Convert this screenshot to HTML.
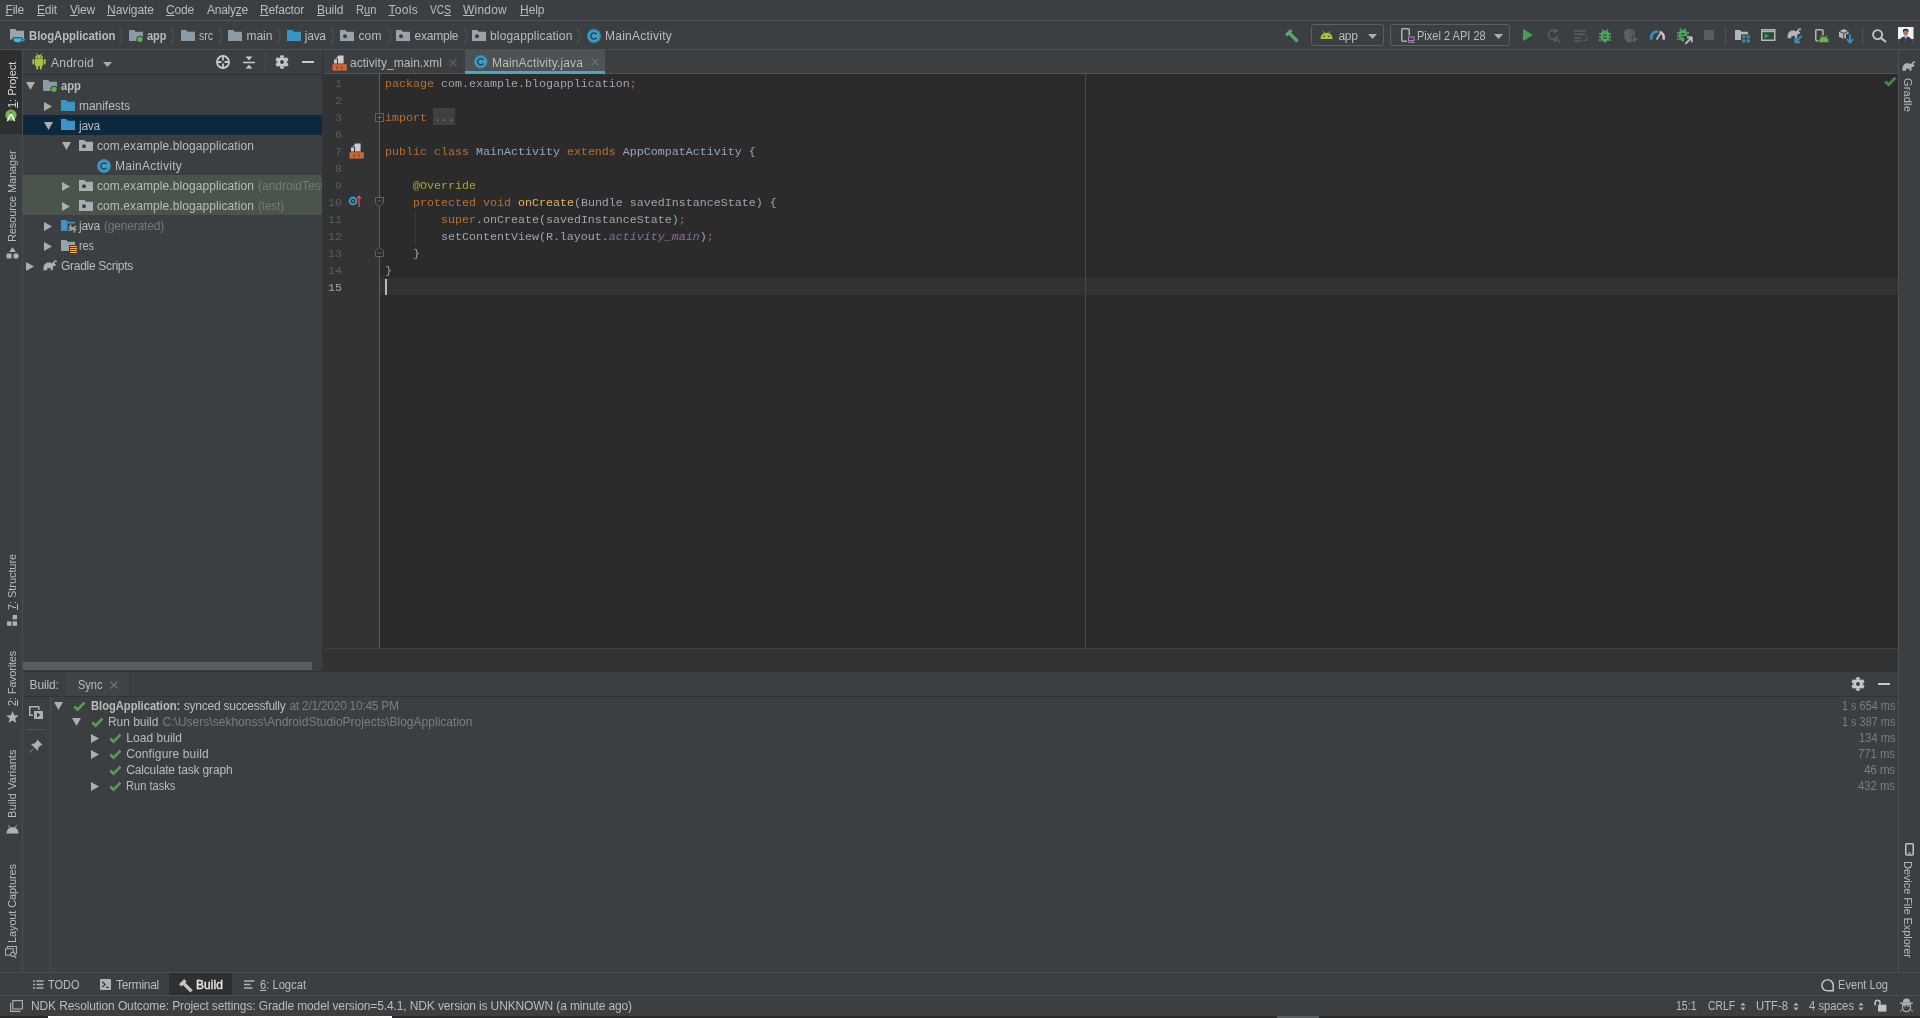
<!DOCTYPE html>
<html><head><meta charset="utf-8">
<title>BlogApplication - MainActivity.java - Android Studio</title>
<style>
*{box-sizing:border-box;margin:0;padding:0}
html,body{width:1920px;height:1018px;overflow:hidden;background:#3c3f41}
body{font-family:"Liberation Sans",sans-serif;font-size:12px;color:#bbbbbb;position:relative}
.abs{position:absolute}
.t{position:absolute;white-space:nowrap;line-height:16px;height:16px;font-size:12px}
.b{font-weight:bold}
.b2{color:#e8e8e8;-webkit-text-stroke:0.35px #e8e8e8}
.g{color:#7d7d7d}
.g2{color:#787878}
u{text-decoration:underline;text-underline-offset:1px;text-decoration-thickness:1px}
svg{position:absolute;overflow:visible}
.mono{font-family:"Liberation Mono",monospace;font-size:11.667px;white-space:pre;position:absolute;left:385px;line-height:17px;height:17px;color:#a9b7c6;opacity:.88}
.ln{position:absolute;font-family:"Liberation Mono",monospace;font-size:11.667px;color:#5b5e61;line-height:17px;height:17px;text-align:right;width:20px;left:322px;white-space:pre}
.k{color:#cc7832}.an{color:#bbb529}.fn{color:#ffc66d}.sf{color:#9876aa;font-style:italic}
.vt{position:absolute;white-space:nowrap;line-height:14px;height:14px;font-size:11px;transform-origin:0 0;color:#bbbbbb}
#fg{position:absolute;left:0;top:0;width:1920px;height:1018px;will-change:transform}

</style></head><body>
<!-- ===== MENU BAR / NAV BAR ===== -->
<div class="abs" style="left:0;top:0;width:1920px;height:20px;background:#3c3f41"></div>
<div class="abs" style="left:0;top:20px;width:1920px;height:1px;background:#505355"></div>
<div class="abs" style="left:0;top:49px;width:1920px;height:1px;background:#4d5052"></div>

<!-- ===== LEFT STRIP ===== -->
<div class="abs" style="left:0;top:50px;width:22px;height:922px;background:#3c3f41"></div>
<div class="abs" style="left:0;top:50px;width:22px;height:84px;background:#2d2f30"></div>
<div class="abs" style="left:22px;top:50px;width:1px;height:922px;background:#4b4e50"></div>
<!-- ===== RIGHT STRIP ===== -->
<div class="abs" style="left:1898px;top:50px;width:1px;height:922px;background:#4d5052"></div>

<!-- ===== PROJECT PANEL ===== -->
<div class="abs" style="left:23px;top:74px;width:299px;height:1px;background:#2f3133"></div>
<div class="abs" style="left:23px;top:115px;width:299px;height:20px;background:#0d293e"></div>
<div class="abs" style="left:23px;top:175px;width:299px;height:40px;background:#49544b"></div>
<div class="abs" style="left:265px;top:54px;width:1px;height:17px;background:#4b4b4b"></div>
<div class="abs" style="left:23px;top:662px;width:289px;height:8px;background:#595c5e"></div>
<div class="abs" style="left:23px;top:671px;width:299px;height:1px;background:#303335"></div>
<div class="abs" style="left:322px;top:50px;width:2px;height:622px;background:#313335"></div>

<!-- ===== EDITOR ===== -->
<div class="abs" style="left:323px;top:50px;width:1575px;height:24px;background:#3c3f41"></div>
<div class="abs" style="left:323px;top:74px;width:1575px;height:574px;background:#2b2b2b"></div>
<div class="abs" style="left:324px;top:73px;width:1574px;height:1px;background:#515456"></div>
<div class="abs" style="left:465px;top:50px;width:140px;height:24px;background:#4e5254"></div>
<div class="abs" style="left:465px;top:71px;width:140px;height:3px;background:#48a8c8"></div>
<div class="abs" style="left:323px;top:278px;width:1575px;height:17px;background:#323232"></div>
<div class="abs" style="left:322px;top:74px;width:57px;height:574px;background:#313335"></div>
<div class="abs" style="left:379px;top:74px;width:1px;height:574px;background:#5e5e5e"></div>
<div class="abs" style="left:1085px;top:74px;width:1px;height:574px;background:#4a4a4a"></div>
<div class="abs" style="left:323px;top:648px;width:1575px;height:24px;background:#313335"></div>
<div class="abs" style="left:323px;top:648px;width:1575px;height:1px;background:#3a3c3e"></div>
<!-- caret -->
<div class="abs" style="left:385px;top:279px;width:2px;height:16px;background:#bbbbbb"></div>
<!-- indent guide -->
<div class="abs" style="left:415px;top:211px;width:1px;height:34px;background:#3b3b3b"></div>

<!-- ===== BUILD PANEL ===== -->
<div class="abs" style="left:23px;top:672px;width:1875px;height:300px;background:#3c3f41"></div>
<div class="abs" style="left:66px;top:672px;width:63px;height:24px;background:#404447"></div>
<div class="abs" style="left:23px;top:696px;width:1875px;height:1px;background:#323537"></div>
<div class="abs" style="left:50px;top:697px;width:1px;height:275px;background:#4b4e50"></div>
<div class="abs" style="left:27px;top:729px;width:19px;height:1px;background:#515456"></div>

<!-- ===== BOTTOM STRIP ===== -->
<div class="abs" style="left:0;top:972px;width:1920px;height:1px;background:#4b4e50"></div>
<div class="abs" style="left:169px;top:973px;width:63px;height:22px;background:#2d2f30"></div>
<!-- ===== STATUS BAR ===== -->
<div class="abs" style="left:0;top:995px;width:1920px;height:1px;background:#4b4e50"></div>
<div class="abs" style="left:48px;top:1016px;width:344px;height:2px;background:#ffffff"></div>
<div class="abs" style="left:0;top:1016px;width:48px;height:2px;background:#2b2b2b"></div>
<div class="abs" style="left:392px;top:1016px;width:1528px;height:2px;background:#2b2b2b"></div>
<div class="abs" style="left:1277px;top:1016px;width:42px;height:2px;background:#5a5d5f"></div>

<div id="fg">
<!-- ===== CODE ===== -->
<div class="ln" style="top:76px">1</div>
<div class="ln" style="top:93px">2</div>
<div class="ln" style="top:110px">3</div>
<div class="ln" style="top:127px">6</div>
<div class="ln" style="top:144px">7</div>
<div class="ln" style="top:161px">8</div>
<div class="ln" style="top:178px">9</div>
<div class="ln" style="top:195px">10</div>
<div class="ln" style="top:212px">11</div>
<div class="ln" style="top:229px">12</div>
<div class="ln" style="top:246px">13</div>
<div class="ln" style="top:263px">14</div>
<div class="ln" style="top:280px;color:#a4a3a3">15</div>
<div class="abs" style="left:433px;top:108px;width:22px;height:17px;background:#3e4041"></div>
<div class="mono" style="top:76px"><span class="k">package</span> com.example.blogapplication<span class="k">;</span></div>
<div class="mono" style="top:110px"><span class="k">import</span> <span style="color:#8c8c8c">...</span></div>
<div class="mono" style="top:144px"><span class="k">public class</span> MainActivity <span class="k">extends</span> AppCompatActivity {</div>
<div class="mono" style="top:178px">    <span class="an">@Override</span></div>
<div class="mono" style="top:195px">    <span class="k">protected void</span> <span class="fn">onCreate</span>(Bundle savedInstanceState) {</div>
<div class="mono" style="top:212px">        <span class="k">super</span>.onCreate(savedInstanceState)<span class="k">;</span></div>
<div class="mono" style="top:229px">        setContentView(R.layout.<span class="sf">activity_main</span>)<span class="k">;</span></div>
<div class="mono" style="top:246px">    }</div>
<div class="mono" style="top:263px">}</div>

<!-- ===== ICONS ===== -->
<svg style="left:10px;top:29px" width="16" height="15" viewBox="0 0 16 15"><path d="M0,0H5.2L6.8,1.8H14V10.5H0Z" fill="#9aa7b0"/><path d="M2.4,8.2H12.6V10.2C12.6,13 10.6,14.4 7.5,14.4C4.4,14.4 2.4,13 2.4,10.2Z" fill="#3c3f41"/><path d="M3.6,9.2H11.4V10.2C11.4,12.2 10,13.3 7.5,13.3C5,13.3 3.6,12.2 3.6,10.2Z" fill="#40b6e0"/><path d="M11.4,9.6H13.6C14.8,9.6 14.8,11.8 13.6,11.8H11" fill="none" stroke="#40b6e0" stroke-width="1"/></svg>
<svg style="left:129px;top:30px" width="15" height="13" viewBox="0 0 15 13"><path d="M0,0H5.2L6.8,1.8H14V11H0Z" fill="#8b9aa5"/><circle cx="11" cy="9.3" r="3.6" fill="#3c3f41"/><circle cx="11" cy="9.3" r="2.6" fill="#62b543"/></svg>
<svg style="left:181px;top:30px" width="14" height="11" viewBox="0 0 14 11"><path d="M0,0H5.2L6.8,1.8H14V11H0Z" fill="#8b9aa5"/></svg>
<svg style="left:228px;top:30px" width="14" height="11" viewBox="0 0 14 11"><path d="M0,0H5.2L6.8,1.8H14V11H0Z" fill="#8b9aa5"/></svg>
<svg style="left:287px;top:30px" width="14" height="11" viewBox="0 0 14 11"><path d="M0,0H5.2L6.8,1.8H14V11H0Z" fill="#3a95c2"/></svg>
<svg style="left:340px;top:30px" width="14" height="11" viewBox="0 0 14 11"><path d="M0,0H5.2L6.8,1.8H14V11H0Z" fill="#98a4ad"/><circle cx="5" cy="6.3" r="2" fill="#3c3f41"/></svg>
<svg style="left:396px;top:30px" width="14" height="11" viewBox="0 0 14 11"><path d="M0,0H5.2L6.8,1.8H14V11H0Z" fill="#98a4ad"/><circle cx="5" cy="6.3" r="2" fill="#3c3f41"/></svg>
<svg style="left:472px;top:30px" width="14" height="11" viewBox="0 0 14 11"><path d="M0,0H5.2L6.8,1.8H14V11H0Z" fill="#98a4ad"/><circle cx="5" cy="6.3" r="2" fill="#3c3f41"/></svg>
<svg style="left:587px;top:29px" width="14" height="14" viewBox="0 0 14 14"><circle cx="7" cy="7" r="7" fill="#3689ae"/><circle cx="7" cy="7" r="5.8" fill="#409dc6"/><path d="M9.6,5.4A3.1,3.1 0 1 0 9.6,8.6" fill="none" stroke="#23485c" stroke-width="1.5"/></svg>
<svg style="left:119px;top:28px" width="4" height="16" viewBox="0 0 4 16"><path d="M0.5,0L3.5,8L0.5,16" fill="none" stroke="#505355" stroke-width="1"/></svg>
<svg style="left:171px;top:28px" width="4" height="16" viewBox="0 0 4 16"><path d="M0.5,0L3.5,8L0.5,16" fill="none" stroke="#505355" stroke-width="1"/></svg>
<svg style="left:218.5px;top:28px" width="4" height="16" viewBox="0 0 4 16"><path d="M0.5,0L3.5,8L0.5,16" fill="none" stroke="#505355" stroke-width="1"/></svg>
<svg style="left:277px;top:28px" width="4" height="16" viewBox="0 0 4 16"><path d="M0.5,0L3.5,8L0.5,16" fill="none" stroke="#505355" stroke-width="1"/></svg>
<svg style="left:330.5px;top:28px" width="4" height="16" viewBox="0 0 4 16"><path d="M0.5,0L3.5,8L0.5,16" fill="none" stroke="#505355" stroke-width="1"/></svg>
<svg style="left:387.5px;top:28px" width="4" height="16" viewBox="0 0 4 16"><path d="M0.5,0L3.5,8L0.5,16" fill="none" stroke="#505355" stroke-width="1"/></svg>
<svg style="left:463.5px;top:28px" width="4" height="16" viewBox="0 0 4 16"><path d="M0.5,0L3.5,8L0.5,16" fill="none" stroke="#505355" stroke-width="1"/></svg>
<svg style="left:577px;top:28px" width="4" height="16" viewBox="0 0 4 16"><path d="M0.5,0L3.5,8L0.5,16" fill="none" stroke="#505355" stroke-width="1"/></svg>
<svg style="left:1283.5px;top:27.5px" width="16" height="16" viewBox="0 0 16 16"><g fill="#59a869"><path d="M1,6.2L6.2,1L8.6,3.4L7.3,4.7L14.8,12.2L12.4,14.6L4.9,7.1L3.4,8.6Z"/></g></svg>
<div class="abs" style="left:1311px;top:24px;width:73px;height:22px;border:1px solid #5e6060;border-radius:3px"></div>
<div class="abs" style="left:1390px;top:24px;width:120px;height:22px;border:1px solid #5e6060;border-radius:3px"></div>
<svg style="left:1320px;top:30.5px" width="13" height="8" viewBox="0 0 13 8"><path d="M0.5,8C0.5,4 3,1.8 6.5,1.8C10,1.8 12.5,4 12.5,8Z" fill="#a4c639"/><path d="M2.8,0.2L4.4,2.6M10.2,0.2L8.6,2.6" stroke="#a4c639" stroke-width="0.9"/><circle cx="4.2" cy="5.2" r="0.8" fill="#3c3f41"/><circle cx="8.8" cy="5.2" r="0.8" fill="#3c3f41"/></svg>
<svg style="left:1367.5px;top:33.5px" width="9" height="5" viewBox="0 0 9 5"><path d="M0,0H9L4.5,5Z" fill="#adadad"/></svg>
<svg style="left:1494px;top:33.5px" width="9" height="5" viewBox="0 0 9 5"><path d="M0,0H9L4.5,5Z" fill="#adadad"/></svg>
<svg style="left:1400.5px;top:28px" width="14" height="15" viewBox="0 0 14 15"><rect x="0.75" y="0.75" width="7.5" height="12.5" rx="1.2" fill="none" stroke="#afb1b3" stroke-width="1.5"/><rect x="6" y="7.5" width="8" height="7.5" fill="#3c3f41"/><rect x="7.5" y="9" width="5.5" height="3.6" fill="none" stroke="#b389c5" stroke-width="1"/><path d="M6.8,14.3H13.6" stroke="#b389c5" stroke-width="1"/></svg>
<svg style="left:1523px;top:28.8px" width="10" height="12" viewBox="0 0 10 12"><path d="M0,0L10,6L0,12Z" fill="#499c54"/></svg>
<svg style="left:1545.5px;top:28px" width="14" height="15" viewBox="0 0 14 15"><path d="M9.2,3A4.4,4.4 0 1 0 11.2,7.6" fill="none" stroke="#5a5d5f" stroke-width="1.7"/><path d="M8,0.4L12.4,2.8L8.2,5.6Z" fill="#5a5d5f"/><path d="M7.6,14.6L10.6,8.6L13.6,14.6M8.8,12.6H12.4" fill="none" stroke="#5a5d5f" stroke-width="1.3"/></svg>
<svg style="left:1572.5px;top:29.5px" width="15" height="13" viewBox="0 0 15 13"><path d="M1,1H12.5M1,4.4H12.5M1,7.8H8M1,11.2H8" stroke="#5a5d5f" stroke-width="1.6"/><path d="M9.5,10.4H13.6V6.6" fill="none" stroke="#5a5d5f" stroke-width="1.3"/></svg>
<svg style="left:1599px;top:28.5px" width="12" height="14" viewBox="0 0 12 14"><g fill="#50a564"><path d="M2,4.6C2,2.6 3.6,1.8 6,1.8C8.4,1.8 10,2.6 10,4.6V10.2L6,14L2,10.2Z"/><rect x="0" y="4.2" width="2.4" height="1.5"/><rect x="9.6" y="4.2" width="2.4" height="1.5"/><rect x="0" y="7.4" width="2.4" height="1.5"/><rect x="9.6" y="7.4" width="2.4" height="1.5"/><rect x="0" y="10.4" width="2.6" height="1.5"/><rect x="9.4" y="10.4" width="2.6" height="1.5"/></g><path d="M3,0.3L4.8,2.6M9,0.3L7.2,2.6" stroke="#50a564" stroke-width="1.3"/><path d="M4.2,6H7.8M4.2,9H7.8" stroke="#2a5a38" stroke-width="1.3"/></svg>
<svg style="left:1624px;top:28.6px" width="15" height="15" viewBox="0 0 15 15"><path d="M0.5,1.6L5.8,0L11,1.6V7.4C11,10.6 8.4,12.8 5.8,13.8C3.2,12.8 0.5,10.6 0.5,7.4Z" fill="#56595b"/><path d="M5.8,0V13.8C3.2,12.8 0.5,10.6 0.5,7.4V1.6Z" fill="#5e6163"/><path d="M8.4,6.6L14.6,10.4L8.4,14.2Z" fill="#5e6163" stroke="#3c3f41" stroke-width="0.8"/></svg>
<svg style="left:1649.5px;top:29.5px" width="15" height="10" viewBox="0 0 15 10"><path d="M1.6,9.6A6,6 0 0 1 8,1.5" fill="none" stroke="#3a8fc0" stroke-width="2.6"/><path d="M9.6,1.8A6,6 0 0 1 13.5,9.6" fill="none" stroke="#c4c4c4" stroke-width="2.6"/><path d="M6.6,9.6L10.2,3.6" stroke="#c4c4c4" stroke-width="1.7"/></svg>
<svg style="left:1677px;top:28px" width="12" height="14" viewBox="0 0 12 14"><g fill="#50a564"><path d="M2,4.6C2,2.6 3.6,1.8 6,1.8C8.4,1.8 10,2.6 10,4.6V10.2L6,14L2,10.2Z"/><rect x="0" y="4.2" width="2.4" height="1.5"/><rect x="9.6" y="4.2" width="2.4" height="1.5"/><rect x="0" y="7.4" width="2.4" height="1.5"/><rect x="9.6" y="7.4" width="2.4" height="1.5"/><rect x="0" y="10.4" width="2.6" height="1.5"/><rect x="9.4" y="10.4" width="2.6" height="1.5"/></g><path d="M3,0.3L4.8,2.6M9,0.3L7.2,2.6" stroke="#50a564" stroke-width="1.3"/><path d="M4.2,6H7.8M4.2,9H7.8" stroke="#2a5a38" stroke-width="1.3"/></svg>
<svg style="left:1684px;top:35.5px" width="9" height="9" viewBox="0 0 9 9"><rect x="0" y="0" width="9" height="9" fill="#3c3f41"/><path d="M1.4,7.8L7,2.2M3,1.4H7.8V6.2" fill="none" stroke="#c4c4c4" stroke-width="1.7"/></svg>
<svg style="left:1704.3px;top:30.2px" width="10" height="10" viewBox="0 0 10 10"><rect width="10" height="10" fill="#5a5d5f"/></svg>
<div class="abs" style="left:1725px;top:27px;width:1px;height:18px;background:#4f5254"></div>
<div class="abs" style="left:1862px;top:27px;width:1px;height:18px;background:#4f5254"></div>
<svg style="left:1735px;top:30px" width="16" height="13" viewBox="0 0 16 13"><path d="M0,0H5L6.5,1.8H13V10H0Z" fill="#b4b6b8"/><rect x="6" y="4.4" width="9.6" height="8.6" fill="#3c3f41"/><rect x="7.2" y="5.4" width="3.2" height="3" fill="#3a87b0"/><rect x="11.6" y="5.4" width="3.2" height="3" fill="#3a87b0"/><rect x="7.2" y="9.4" width="3.2" height="3" fill="#3a87b0"/><rect x="11.6" y="9.4" width="3.2" height="3" fill="#3a87b0"/></svg>
<svg style="left:1761px;top:28.8px" width="14.5" height="12" viewBox="0 0 14.5 12"><rect x="0.75" y="0.75" width="13" height="10.5" fill="#2f4a38" stroke="#b4b6b8" stroke-width="1.5"/><path d="M0.75,2.4H13.75" stroke="#b4b6b8" stroke-width="1.6"/><path d="M3.8,4.4L8,7L3.8,9.6Z" fill="#499c54"/></svg>
<svg style="left:1787px;top:28px" width="15" height="10.5" viewBox="0 0 15.4 11"><path d="M0.6,10.8C0.2,6.5 1.5,3.2 5.2,2.6C7.2,2.3 8.6,3 9.6,3.6C10.6,2.6 11.6,0.4 13.4,0.2C14.8,0.1 15.2,1.6 14.2,2.2C13.6,1.6 12.9,1.7 12.5,2.4C12,3.4 12.8,4.6 13.8,4.3C13.6,6 12,7 10.6,6.6L10.4,10.8H8.2L8,8.2C7,8.6 5.6,8.6 4.6,8.2L4.4,10.8Z" fill="#b4b6b8"/></svg>
<svg style="left:1794px;top:35px" width="8.5" height="8.5" viewBox="0 0 8.5 8.5"><path d="M7.6,0.8L2.4,6M1.4,2.4V7.2H6.2" fill="none" stroke="#3a8fc0" stroke-width="1.9"/></svg>
<svg style="left:1814.5px;top:28.6px" width="14" height="14" viewBox="0 0 14 14"><rect x="0.75" y="0.75" width="7.2" height="11" rx="1" fill="none" stroke="#b4b6b8" stroke-width="1.5"/><rect x="3.2" y="6.4" width="11" height="8" fill="#3c3f41"/><path d="M4,13.2C4,9.6 6,7.8 8.8,7.8C11.6,7.8 13.6,9.6 13.6,13.2Z" fill="#6cb345"/><path d="M5.6,6.2L6.8,8.2M12,6.2L10.8,8.2" stroke="#6cb345" stroke-width="0.9"/></svg>
<svg style="left:1838.8px;top:28.8px" width="16" height="15" viewBox="0 0 16 15"><path d="M4.8,0L9.6,2.2V7.8L4.8,10L0,7.8V2.2Z" fill="#b4b6b8"/><path d="M4.8,4.4V10M0,2.2L4.8,4.4L9.6,2.2" stroke="#3c3f41" stroke-width="1" fill="none"/><rect x="7" y="5" width="8" height="10" fill="#3c3f41"/><path d="M11,5.6V13M7.8,10.2L11,13.6L14.2,10.2" fill="none" stroke="#3a8fc0" stroke-width="1.9"/></svg>
<svg style="left:1872px;top:28.8px" width="15" height="14" viewBox="0 0 15 14"><circle cx="5.6" cy="5.6" r="4.5" fill="none" stroke="#c4c4c4" stroke-width="1.9"/><path d="M8.8,8.8L14,13" stroke="#c4c4c4" stroke-width="2.2"/></svg>
<svg style="left:1897.5px;top:27px" width="15.5" height="16.3" viewBox="0 0 15.5 16.3"><rect width="15.5" height="12" fill="#f2f1ee"/><rect y="12" width="15.5" height="4.3" fill="#4a4c4e"/><ellipse cx="7.7" cy="4" rx="2.8" ry="2.2" fill="#2a2421"/><ellipse cx="7.7" cy="6" rx="2.3" ry="2.8" fill="#a87b5e"/><path d="M1.4,16.3C1.4,11 4,9.6 7.7,9.6C11.4,9.6 14,11 14,16.3Z" fill="#343a46"/><path d="M6.4,9.6L7.7,13L9,9.6Z" fill="#dfe3ea"/><rect x="7.2" y="10.6" width="1" height="5.4" fill="#6a4b55"/></svg>
<svg style="left:32px;top:53px" width="14" height="17" viewBox="0 0 14 17"><g fill="#a4c639"><path d="M3,5.4C3,3.2 4.8,1.8 7,1.8C9.2,1.8 11,3.2 11,5.4Z"/><rect x="3" y="6" width="8" height="7" rx="0.8"/><rect x="0.4" y="6" width="2" height="5.4" rx="1"/><rect x="11.6" y="6" width="2" height="5.4" rx="1"/><rect x="4.2" y="12" width="2" height="4.6" rx="1"/><rect x="7.8" y="12" width="2" height="4.6" rx="1"/></g><path d="M4.2,0.2L5.4,2.2M9.8,0.2L8.6,2.2" stroke="#a4c639" stroke-width="0.8"/><circle cx="5.3" cy="3.8" r="0.6" fill="#3c3f41"/><circle cx="8.7" cy="3.8" r="0.6" fill="#3c3f41"/></svg>
<svg style="left:103px;top:61.5px" width="9" height="5" viewBox="0 0 9 5"><path d="M0,0H9L4.5,5Z" fill="#adadad"/></svg>
<svg style="left:216px;top:55px" width="14" height="14" viewBox="0 0 14 14"><circle cx="7" cy="7" r="6" fill="none" stroke="#c9c9c9" stroke-width="1.8"/><path d="M7,0.5V5.4M7,8.6V13.5M0.5,7H5.4M8.6,7H13.5" stroke="#c9c9c9" stroke-width="1.8"/></svg>
<svg style="left:243px;top:55.5px" width="12" height="13" viewBox="0 0 12 13"><path d="M0,6.5H12" stroke="#c9c9c9" stroke-width="1.5"/><path d="M2.6,0.4H9.4L6,4.2ZM2.6,12.6H9.4L6,8.8Z" fill="#c9c9c9"/></svg>
<svg style="left:274px;top:54px" width="16" height="16" viewBox="0 0 16 16"><g transform="translate(8,8)"><path d="M-2.3,-4.5L-1.4,-6.7H1.4L2.3,-4.5Z" transform="rotate(0)" fill="#c9c9c9"/><path d="M-2.3,-4.5L-1.4,-6.7H1.4L2.3,-4.5Z" transform="rotate(60)" fill="#c9c9c9"/><path d="M-2.3,-4.5L-1.4,-6.7H1.4L2.3,-4.5Z" transform="rotate(120)" fill="#c9c9c9"/><path d="M-2.3,-4.5L-1.4,-6.7H1.4L2.3,-4.5Z" transform="rotate(180)" fill="#c9c9c9"/><path d="M-2.3,-4.5L-1.4,-6.7H1.4L2.3,-4.5Z" transform="rotate(240)" fill="#c9c9c9"/><path d="M-2.3,-4.5L-1.4,-6.7H1.4L2.3,-4.5Z" transform="rotate(300)" fill="#c9c9c9"/><circle r="4.800000000000001" fill="#c9c9c9"/><circle r="1.9" fill="#3c3f41"/></g></svg>
<svg style="left:302px;top:61px" width="12" height="2" viewBox="0 0 12 2"><rect width="12" height="2" fill="#c9c9c9"/></svg>
<svg style="left:25.5px;top:82px" width="9" height="8" viewBox="0 0 9 8"><path d="M0,0H9L4.5,8Z" fill="#adadad"/></svg>
<svg style="left:43px;top:80px" width="15" height="13" viewBox="0 0 15 13"><path d="M0,0H5.2L6.8,1.8H14V11H0Z" fill="#8b9aa5"/><circle cx="11" cy="9.3" r="3.6" fill="#3c3f41"/><circle cx="11" cy="9.3" r="2.6" fill="#62b543"/></svg>
<svg style="left:44px;top:101.5px" width="8" height="9" viewBox="0 0 8 9"><path d="M0,0L8,4.5L0,9Z" fill="#adadad"/></svg>
<svg style="left:61px;top:100px" width="14" height="11" viewBox="0 0 14 11"><path d="M0,0H5.2L6.8,1.8H14V11H0Z" fill="#3a95c2"/></svg>
<svg style="left:43.5px;top:122px" width="9" height="8" viewBox="0 0 9 8"><path d="M0,0H9L4.5,8Z" fill="#adadad"/></svg>
<svg style="left:61px;top:119px" width="14" height="11" viewBox="0 0 14 11"><path d="M0,0H5.2L6.8,1.8H14V11H0Z" fill="#3a95c2"/></svg>
<svg style="left:61.5px;top:142px" width="9" height="8" viewBox="0 0 9 8"><path d="M0,0H9L4.5,8Z" fill="#adadad"/></svg>
<svg style="left:79px;top:139.5px" width="14" height="11" viewBox="0 0 14 11"><path d="M0,0H5.2L6.8,1.8H14V11H0Z" fill="#a6adb3"/><circle cx="5" cy="6.3" r="2" fill="#3c3f41"/></svg>
<svg style="left:97px;top:158.5px" width="14" height="14" viewBox="0 0 14 14"><circle cx="7" cy="7" r="7" fill="#3689ae"/><circle cx="7" cy="7" r="5.8" fill="#409dc6"/><path d="M9.6,5.4A3.1,3.1 0 1 0 9.6,8.6" fill="none" stroke="#23485c" stroke-width="1.5"/></svg>
<svg style="left:62px;top:181.5px" width="8" height="9" viewBox="0 0 8 9"><path d="M0,0L8,4.5L0,9Z" fill="#adadad"/></svg>
<svg style="left:79px;top:179.5px" width="14" height="11" viewBox="0 0 14 11"><path d="M0,0H5.2L6.8,1.8H14V11H0Z" fill="#a6adb3"/><circle cx="5" cy="6.3" r="2" fill="#3c3f41"/></svg>
<svg style="left:62px;top:201.5px" width="8" height="9" viewBox="0 0 8 9"><path d="M0,0L8,4.5L0,9Z" fill="#adadad"/></svg>
<svg style="left:79px;top:199.5px" width="14" height="11" viewBox="0 0 14 11"><path d="M0,0H5.2L6.8,1.8H14V11H0Z" fill="#a6adb3"/><circle cx="5" cy="6.3" r="2" fill="#3c3f41"/></svg>
<svg style="left:44px;top:221.5px" width="8" height="9" viewBox="0 0 8 9"><path d="M0,0L8,4.5L0,9Z" fill="#adadad"/></svg>
<svg style="left:61px;top:219.5px" width="14" height="11" viewBox="0 0 14 11"><path d="M0,0H5.2L6.8,1.8H14V11H0Z" fill="#3a95c2"/></svg>
<svg style="left:67.5px;top:224px" width="9" height="9" viewBox="0 0 9 9"><rect x="-0.5" y="-0.5" width="10" height="10" fill="#3c3f41"/><g transform="translate(4.5,4.5)" fill="none" stroke="#b4b8bb" stroke-width="1.1"><path d="M0,0C1,-2 3,-2.4 4,-1.4"/><path d="M0,0C2,1 2.4,3 1.4,4"/><path d="M0,0C-1,2 -3,2.4 -4,1.4"/><path d="M0,0C-2,-1 -2.4,-3 -1.4,-4"/><path d="M0,0C2.2,-0.8 3.6,0.6 3.4,2"/><path d="M0,0C-2.2,0.8 -3.6,-0.6 -3.4,-2"/></g></svg>
<svg style="left:44px;top:241.5px" width="8" height="9" viewBox="0 0 8 9"><path d="M0,0L8,4.5L0,9Z" fill="#adadad"/></svg>
<svg style="left:61px;top:239.5px" width="14" height="11" viewBox="0 0 14 11"><path d="M0,0H5.2L6.8,1.8H14V11H0Z" fill="#95a3ad"/></svg>
<svg style="left:69.5px;top:245.5px" width="7" height="8" viewBox="0 0 7 8"><rect x="-1" y="-1" width="9" height="10" fill="#3c3f41"/><path d="M0,0.5H7M0,2.5H7M0,4.5H7M0,6.5H7" stroke="#f4af3d" stroke-width="1"/></svg>
<svg style="left:26px;top:261.5px" width="8" height="9" viewBox="0 0 8 9"><path d="M0,0L8,4.5L0,9Z" fill="#adadad"/></svg>
<svg style="left:43px;top:260px" width="14.5" height="10.5" viewBox="0 0 15.4 11"><path d="M0.6,10.8C0.2,6.5 1.5,3.2 5.2,2.6C7.2,2.3 8.6,3 9.6,3.6C10.6,2.6 11.6,0.4 13.4,0.2C14.8,0.1 15.2,1.6 14.2,2.2C13.6,1.6 12.9,1.7 12.5,2.4C12,3.4 12.8,4.6 13.8,4.3C13.6,6 12,7 10.6,6.6L10.4,10.8H8.2L8,8.2C7,8.6 5.6,8.6 4.6,8.2L4.4,10.8Z" fill="#afb1b3"/></svg>
<svg style="left:332px;top:54.5px" width="15" height="16" viewBox="0 0 15 16"><path d="M0.5,9.2H14.8V15.6H0.5Z" fill="#d4673a"/><path d="M4.4,10.6L2.6,12.4L4.4,14.2M6.8,10.6L8.6,12.4L6.8,14.2" fill="none" stroke="#9c4218" stroke-width="1.3" transform="translate(1.9,0)"/><path d="M2,8.4V4.6H5V8.4ZM6,8.4V0.6H11.6V8.4Z" fill="#c8ccd0"/><path d="M6,3.8H3.2L6,1Z" fill="#9aa3aa"/></svg>
<svg style="left:449px;top:58.5px" width="8" height="8" viewBox="0 0 8 8"><path d="M0.5,0.5L7.5,7.5M7.5,0.5L0.5,7.5" stroke="#5f6265" stroke-width="1.1" fill="none"/></svg>
<svg style="left:473.7px;top:55.2px" width="13.6" height="13.6" viewBox="0 0 13.6 13.6"><circle cx="6.8" cy="6.8" r="6.8" fill="#3689ae"/><circle cx="6.8" cy="6.8" r="5.6" fill="#409dc6"/><path d="M9.4,5.199999999999999A3.1,3.1 0 1 0 9.4,8.4" fill="none" stroke="#23485c" stroke-width="1.5"/></svg>
<svg style="left:590.5px;top:57.5px" width="8" height="8" viewBox="0 0 8 8"><path d="M0.5,0.5L7.5,7.5M7.5,0.5L0.5,7.5" stroke="#6e7275" stroke-width="1.1" fill="none"/></svg>
<svg style="left:1884px;top:76px" width="12.5" height="10.5" viewBox="0 0 12.5 10.5"><path d="M1.2,5.4L4.6,8.6L11.4,1.6" fill="none" stroke="#3f8f43" stroke-width="2.7"/></svg>
<svg style="left:349px;top:143px" width="15" height="16" viewBox="0 0 15 16"><path d="M0.5,9.2H14.8V15.6H0.5Z" fill="#d4673a"/><path d="M4.4,10.6L2.6,12.4L4.4,14.2M6.8,10.6L8.6,12.4L6.8,14.2" fill="none" stroke="#9c4218" stroke-width="1.3" transform="translate(1.9,0)"/><path d="M2,8.4V4.6H5V8.4ZM6,8.4V0.6H11.6V8.4Z" fill="#c8ccd0"/><path d="M6,3.8H3.2L6,1Z" fill="#9aa3aa"/></svg>
<svg style="left:348px;top:195px" width="14" height="13" viewBox="0 0 14 13"><circle cx="5" cy="6" r="4.4" fill="#3a93bd"/><circle cx="5" cy="6" r="2.2" fill="#2b2b2b"/><circle cx="5" cy="6" r="1" fill="#46a6d2"/><path d="M11,12V1.4M8.8,3.6L11,1.2L13.2,3.6" fill="none" stroke="#e05555" stroke-width="1.2"/></svg>
<svg style="left:375px;top:113px" width="9" height="9" viewBox="0 0 9 9"><rect x="0.5" y="0.5" width="8" height="8" fill="#2b2b2b" stroke="#606366"/><path d="M2,4.5H7M4.5,2V7" stroke="#606366"/></svg>
<svg style="left:375px;top:197px" width="9" height="10" viewBox="0 0 9 10"><path d="M0.5,0.5H8.5V6L4.5,9.5L0.5,6Z" fill="#2b2b2b" stroke="#606366"/><path d="M2.4,4H6.6" stroke="#606366"/></svg>
<svg style="left:375px;top:247px" width="9" height="10" viewBox="0 0 9 10"><path d="M0.5,9.5H8.5V4L4.5,0.5L0.5,4Z" fill="#2b2b2b" stroke="#606366"/><path d="M2.4,6H6.6" stroke="#606366"/></svg>
<svg style="left:110px;top:680.5px" width="8" height="8" viewBox="0 0 8 8"><path d="M0.5,0.5L7.5,7.5M7.5,0.5L0.5,7.5" stroke="#6e7275" stroke-width="1.1" fill="none"/></svg>
<svg style="left:1850px;top:675.5px" width="16" height="16" viewBox="0 0 16 16"><g transform="translate(8,8)"><path d="M-2.3,-4.5L-1.4,-6.7H1.4L2.3,-4.5Z" transform="rotate(0)" fill="#c9c9c9"/><path d="M-2.3,-4.5L-1.4,-6.7H1.4L2.3,-4.5Z" transform="rotate(60)" fill="#c9c9c9"/><path d="M-2.3,-4.5L-1.4,-6.7H1.4L2.3,-4.5Z" transform="rotate(120)" fill="#c9c9c9"/><path d="M-2.3,-4.5L-1.4,-6.7H1.4L2.3,-4.5Z" transform="rotate(180)" fill="#c9c9c9"/><path d="M-2.3,-4.5L-1.4,-6.7H1.4L2.3,-4.5Z" transform="rotate(240)" fill="#c9c9c9"/><path d="M-2.3,-4.5L-1.4,-6.7H1.4L2.3,-4.5Z" transform="rotate(300)" fill="#c9c9c9"/><circle r="4.800000000000001" fill="#c9c9c9"/><circle r="1.9" fill="#3c3f41"/></g></svg>
<svg style="left:1878px;top:682.5px" width="12" height="2" viewBox="0 0 12 2"><rect width="12" height="2" fill="#c9c9c9"/></svg>
<svg style="left:29px;top:705.5px" width="15" height="14" viewBox="0 0 15 14"><rect x="0.75" y="0.75" width="9" height="8.5" fill="none" stroke="#afb1b3" stroke-width="1.5"/><rect x="4.5" y="4.5" width="10" height="9" fill="#afb1b3" stroke="#3c3f41" stroke-width="1"/><path d="M8,6.4L11.4,9L8,11.6Z" fill="#3c3f41"/></svg>
<svg style="left:29px;top:739px" width="14" height="14" viewBox="0 0 14 14"><path d="M8.2,0.6L13.4,5.8L11.6,6.4L9.4,8.6L9,12L5.6,8.6L1,13.4L0.6,13L5.4,8.4L2,5L5.4,4.6L7.6,2.4Z" fill="#afb1b3"/></svg>
<svg style="left:54px;top:702px" width="9" height="8" viewBox="0 0 9 8"><path d="M0,0H9L4.5,8Z" fill="#adadad"/></svg>
<svg style="left:73px;top:700.5px" width="12.5" height="10.5" viewBox="0 0 12.5 10.5"><path d="M1.2,5.4L4.6,8.6L11.4,1.6" fill="none" stroke="#55a04b" stroke-width="2.7"/></svg>
<svg style="left:72px;top:718px" width="9" height="8" viewBox="0 0 9 8"><path d="M0,0H9L4.5,8Z" fill="#adadad"/></svg>
<svg style="left:91px;top:716.5px" width="12.5" height="10.5" viewBox="0 0 12.5 10.5"><path d="M1.2,5.4L4.6,8.6L11.4,1.6" fill="none" stroke="#55a04b" stroke-width="2.7"/></svg>
<svg style="left:91px;top:733.5px" width="8" height="9" viewBox="0 0 8 9"><path d="M0,0L8,4.5L0,9Z" fill="#adadad"/></svg>
<svg style="left:109px;top:732.5px" width="12.5" height="10.5" viewBox="0 0 12.5 10.5"><path d="M1.2,5.4L4.6,8.6L11.4,1.6" fill="none" stroke="#55a04b" stroke-width="2.7"/></svg>
<svg style="left:91px;top:749.5px" width="8" height="9" viewBox="0 0 8 9"><path d="M0,0L8,4.5L0,9Z" fill="#adadad"/></svg>
<svg style="left:109px;top:748.5px" width="12.5" height="10.5" viewBox="0 0 12.5 10.5"><path d="M1.2,5.4L4.6,8.6L11.4,1.6" fill="none" stroke="#55a04b" stroke-width="2.7"/></svg>
<svg style="left:109px;top:764.5px" width="12.5" height="10.5" viewBox="0 0 12.5 10.5"><path d="M1.2,5.4L4.6,8.6L11.4,1.6" fill="none" stroke="#55a04b" stroke-width="2.7"/></svg>
<svg style="left:91px;top:781.5px" width="8" height="9" viewBox="0 0 8 9"><path d="M0,0L8,4.5L0,9Z" fill="#adadad"/></svg>
<svg style="left:109px;top:780.5px" width="12.5" height="10.5" viewBox="0 0 12.5 10.5"><path d="M1.2,5.4L4.6,8.6L11.4,1.6" fill="none" stroke="#55a04b" stroke-width="2.7"/></svg>
<svg style="left:5.2px;top:109.3px" width="12" height="13.4" viewBox="0 0 15 15.6"><circle cx="7.5" cy="7" r="7" fill="#7ab355"/><path d="M2,14L6,5.4H9L13,14L11.2,15L7.5,8L3.8,15Z" fill="#e6f0dc"/><circle cx="7.5" cy="4" r="1.5" fill="#4b8a3c"/></svg>
<svg style="left:6px;top:247px" width="13" height="12" viewBox="0 0 13 12"><path d="M6.5,0L9.8,5H3.2Z" fill="#afb1b3"/><rect x="0.5" y="6.5" width="5" height="5" fill="#afb1b3"/><circle cx="10" cy="9" r="2.7" fill="#afb1b3"/></svg>
<svg style="left:7px;top:615px" width="10" height="11" viewBox="0 0 10 11"><rect x="5.6" y="0" width="4.4" height="4.4" fill="#afb1b3"/><rect x="0" y="6.4" width="4.4" height="4.4" fill="#afb1b3"/><rect x="5.6" y="6.4" width="4.4" height="4.4" fill="#afb1b3"/></svg>
<svg style="left:5.5px;top:710.5px" width="13" height="12" viewBox="0 0 13 12"><path d="M6.5,0L8.2,4.2L12.8,4.5L9.2,7.4L10.4,11.9L6.5,9.4L2.6,11.9L3.8,7.4L0.2,4.5L4.8,4.2Z" fill="#afb1b3"/></svg>
<svg style="left:6px;top:825px" width="13" height="9" viewBox="0 0 13 9"><path d="M0.5,8.6C0.5,4.4 3,2.2 6.5,2.2C10,2.2 12.5,4.4 12.5,8.6Z" fill="#afb1b3"/><path d="M2.4,0.3L4.2,3M10.6,0.3L8.8,3" stroke="#afb1b3" stroke-width="1"/></svg>
<svg style="left:5px;top:945.8px" width="12" height="12" viewBox="0 0 13 13"><path d="M2.6,2.4V0.6H12.4V8.4H10.8" fill="none" stroke="#afb1b3" stroke-width="1.1"/><rect x="0.6" y="3" width="8.4" height="7" fill="none" stroke="#afb1b3" stroke-width="1.1"/><circle cx="8.4" cy="9" r="2.3" fill="#3c3f41" stroke="#afb1b3" stroke-width="1.1"/><path d="M10,10.8L12.2,13" stroke="#afb1b3" stroke-width="1.2"/></svg>
<svg style="left:1902px;top:61px" width="14" height="10" viewBox="0 0 15.4 11"><path d="M0.6,10.8C0.2,6.5 1.5,3.2 5.2,2.6C7.2,2.3 8.6,3 9.6,3.6C10.6,2.6 11.6,0.4 13.4,0.2C14.8,0.1 15.2,1.6 14.2,2.2C13.6,1.6 12.9,1.7 12.5,2.4C12,3.4 12.8,4.6 13.8,4.3C13.6,6 12,7 10.6,6.6L10.4,10.8H8.2L8,8.2C7,8.6 5.6,8.6 4.6,8.2L4.4,10.8Z" fill="#afb1b3"/></svg>
<svg style="left:1904.6px;top:843.2px" width="9" height="12.8" viewBox="0 0 9 12.8"><rect x="0.75" y="0.75" width="7.5" height="11.3" rx="1" fill="none" stroke="#c4c4c4" stroke-width="1.5"/><path d="M3,10H6" stroke="#c4c4c4" stroke-width="1"/></svg>
<svg style="left:33px;top:980px" width="10.5" height="9" viewBox="0 0 10.5 9"><path d="M0,1H2M3.4,1H10.5M0,4.5H2M3.4,4.5H10.5M0,8H2M3.4,8H10.5" stroke="#afb1b3" stroke-width="1.7"/></svg>
<svg style="left:100px;top:979px" width="11" height="11" viewBox="0 0 11 11"><rect width="11" height="11" rx="1" fill="#afb1b3"/><path d="M2.2,2.8L5.2,5.4L2.2,8M5.8,8.4H9" fill="none" stroke="#3c3f41" stroke-width="1.3"/></svg>
<svg style="left:178px;top:977.5px" width="16" height="16" viewBox="0 0 16 16"><g fill="#c4c4c4"><path d="M1,6.2L6.2,1L8.6,3.4L7.3,4.7L14.8,12.2L12.4,14.6L4.9,7.1L3.4,8.6Z"/></g></svg>
<svg style="left:244px;top:980px" width="10.5" height="9" viewBox="0 0 10.5 9"><path d="M0,1H10.5M0,4.5H6.5M0,8H8.5" stroke="#afb1b3" stroke-width="1.7"/></svg>
<svg style="left:1821px;top:978.5px" width="13" height="12.5" viewBox="0 0 13 12.5"><path d="M6.4,0.8A5.5,5.5 0 1 0 6.4,11.8H12.2V6.3A5.6,5.6 0 0 0 6.4,0.8Z" fill="none" stroke="#c4c4c4" stroke-width="1.5"/></svg>
<svg style="left:9.5px;top:1000px" width="13" height="12" viewBox="0 0 13 12"><rect x="2.8" y="0.6" width="9.6" height="8.4" fill="none" stroke="#afb1b3" stroke-width="1.1"/><path d="M0.6,2.8V11.4H10.4" fill="none" stroke="#afb1b3" stroke-width="1.1"/></svg>
<svg style="left:1740px;top:1001.5px" width="6" height="9" viewBox="0 0 6 9"><path d="M0.4,3.4L3,0.4L5.6,3.4ZM0.4,5.6L3,8.6L5.6,5.6Z" fill="#afb1b3"/></svg>
<svg style="left:1793px;top:1001.5px" width="6" height="9" viewBox="0 0 6 9"><path d="M0.4,3.4L3,0.4L5.6,3.4ZM0.4,5.6L3,8.6L5.6,5.6Z" fill="#afb1b3"/></svg>
<svg style="left:1858px;top:1001.5px" width="6" height="9" viewBox="0 0 6 9"><path d="M0.4,3.4L3,0.4L5.6,3.4ZM0.4,5.6L3,8.6L5.6,5.6Z" fill="#afb1b3"/></svg>
<svg style="left:1874px;top:999px" width="13" height="13" viewBox="0 0 13 13"><rect x="4" y="5.6" width="8.4" height="7" fill="#c4c4c4"/><path d="M1.2,6.4V3.6A2.4,2.4 0 0 1 6,3.6V5.6" fill="none" stroke="#c4c4c4" stroke-width="1.5"/></svg>
<svg style="left:1900px;top:998px" width="13" height="14" viewBox="0 0 13 14"><path d="M3,3.4C3,1.4 4.4,0.4 6.5,0.4C8.6,0.4 10,1.4 10,3.4V4.6H3Z" fill="#afb1b3"/><rect x="0.2" y="4.4" width="12.6" height="1.5" fill="#afb1b3"/><path d="M2.6,6.6H10.4V9.6C10.4,12 8.6,13.6 6.5,13.6C4.4,13.6 2.6,12 2.6,9.6Z" fill="none" stroke="#afb1b3" stroke-width="1.1"/><path d="M3.6,8.2H5.8M7.2,8.2H9.4" stroke="#afb1b3" stroke-width="1.3"/><path d="M0.6,13.8C1,12 2,11.4 3.2,11.2M12.4,13.8C12,12 11,11.4 9.8,11.2" fill="none" stroke="#afb1b3" stroke-width="1"/></svg>
<div class="vt" id="v0" style="left:4.8px;top:107.7px;transform:rotate(-90deg);letter-spacing:-0.010px"><span style="color:#d8d8d8"><u>1</u>: Project</span></div>
<div class="vt" id="v1" style="left:4.8px;top:241.5px;transform:rotate(-90deg);letter-spacing:-0.125px">Resource Manager</div>
<div class="vt" id="v2" style="left:4.8px;top:609.6px;transform:rotate(-90deg);letter-spacing:-0.067px"><u>7</u>: Structure</div>
<div class="vt" id="v3" style="left:4.8px;top:706px;transform:rotate(-90deg);letter-spacing:-0.200px"><u>2</u>: Favorites</div>
<div class="vt" id="v4" style="left:4.8px;top:818px;transform:rotate(-90deg);letter-spacing:0.114px">Build Variants</div>
<div class="vt" id="v5" style="left:4.8px;top:943.2px;transform:rotate(-90deg);letter-spacing:-0.120px">Layout Captures</div>
<div class="vt" id="v6" style="left:1914.5px;top:77.5px;transform:rotate(90deg);letter-spacing:0.150px">Gradle</div>
<div class="vt" id="v7" style="left:1914.5px;top:860.5px;transform:rotate(90deg);letter-spacing:-0.075px">Device File Explorer</div>

<!-- ===== TEXT ===== -->
<div class="t " id="t0" style="left:5.5px;top:1.5px;letter-spacing:-0.215px;"><u>F</u>ile</div>
<div class="t " id="t1" style="left:37px;top:1.5px;letter-spacing:-0.176px;"><u>E</u>dit</div>
<div class="t " id="t2" style="left:70px;top:1.5px;letter-spacing:-0.203px;"><u>V</u>iew</div>
<div class="t " id="t3" style="left:107px;top:1.5px;letter-spacing:-0.047px;"><u>N</u>avigate</div>
<div class="t " id="t4" style="left:166px;top:1.5px;letter-spacing:-0.176px;"><u>C</u>ode</div>
<div class="t " id="t5" style="left:207px;top:1.5px;letter-spacing:-0.246px;">Analy<u>z</u>e</div>
<div class="t " id="t6" style="left:260px;top:1.5px;letter-spacing:-0.170px;"><u>R</u>efactor</div>
<div class="t " id="t7" style="left:317px;top:1.5px;letter-spacing:-0.041px;"><u>B</u>uild</div>
<div class="t " id="t8" style="left:356px;top:1.5px;transform:scaleX(0.9298);transform-origin:0 50%;">R<u>u</u>n</div>
<div class="t " id="t9" style="left:388.5px;top:1.5px;letter-spacing:0.297px;"><u>T</u>ools</div>
<div class="t " id="t10" style="left:430px;top:1.5px;transform:scaleX(0.8506);transform-origin:0 50%;">VC<u>S</u></div>
<div class="t " id="t11" style="left:463px;top:1.5px;letter-spacing:0.219px;"><u>W</u>indow</div>
<div class="t " id="t12" style="left:520px;top:1.5px;letter-spacing:-0.047px;"><u>H</u>elp</div>
<div class="t b" id="t13" style="left:28.5px;top:27.5px;transform:scaleX(0.9402);transform-origin:0 50%;">BlogApplication</div>
<div class="t b" id="t14" style="left:147px;top:27.5px;transform:scaleX(0.9136);transform-origin:0 50%;">app</div>
<div class="t " id="t15" style="left:199.3px;top:27.5px;transform:scaleX(0.8812);transform-origin:0 50%;">src</div>
<div class="t " id="t16" style="left:246.6px;top:27.5px;letter-spacing:-0.079px;">main</div>
<div class="t " id="t17" style="left:304.8px;top:27.5px;letter-spacing:-0.254px;">java</div>
<div class="t " id="t18" style="left:358.4px;top:27.5px;letter-spacing:0.209px;">com</div>
<div class="t " id="t19" style="left:414.5px;top:27.5px;letter-spacing:-0.223px;">example</div>
<div class="t " id="t20" style="left:490px;top:27.5px;letter-spacing:0.163px;">blogapplication</div>
<div class="t " id="t21" style="left:605px;top:27.5px;letter-spacing:0.249px;">MainActivity</div>
<div class="t " id="t22" style="left:1338.4px;top:27.5px;letter-spacing:-0.244px;">app</div>
<div class="t " id="t23" style="left:1417.3px;top:27.5px;transform:scaleX(0.9194);transform-origin:0 50%;">Pixel 2 API 28</div>
<div class="t " id="t24" style="left:51px;top:54.5px;letter-spacing:0.232px;">Android</div>
<div class="t b" id="t25" style="left:61px;top:78px;transform:scaleX(0.9370);transform-origin:0 50%;">app</div>
<div class="t " id="t26" style="left:79px;top:98px;letter-spacing:-0.040px;">manifests</div>
<div class="t " id="t27" style="left:79px;top:118px;letter-spacing:-0.254px;">java</div>
<div class="t " id="t28" style="left:97px;top:138px;letter-spacing:0.083px;">com.example.blogapplication</div>
<div class="t " id="t29" style="left:115px;top:158px;letter-spacing:0.249px;">MainActivity</div>
<div class="t " id="t30" style="left:97px;top:178px;letter-spacing:0.083px;">com.example.blogapplication</div>
<div class="t g2" id="t31" style="left:258px;top:178px;letter-spacing:-0.002px;max-width:64px;overflow:hidden;">(androidTest)</div>
<div class="t " id="t32" style="left:97px;top:198px;letter-spacing:0.083px;">com.example.blogapplication</div>
<div class="t g2" id="t33" style="left:258px;top:198px;letter-spacing:-0.224px;">(test)</div>
<div class="t " id="t34" style="left:79px;top:218px;letter-spacing:-0.254px;">java</div>
<div class="t g2" id="t35" style="left:104px;top:218px;letter-spacing:-0.186px;">(generated)</div>
<div class="t " id="t36" style="left:79px;top:238px;transform:scaleX(0.8997);transform-origin:0 50%;">res</div>
<div class="t " id="t37" style="left:61px;top:258px;letter-spacing:-0.288px;">Gradle Scripts</div>
<div class="t " id="t38" style="left:350px;top:54.5px;letter-spacing:0.038px;">activity_main.xml</div>
<div class="t " id="t39" style="left:492px;top:54.5px;letter-spacing:0.148px;">MainActivity.java</div>
<div class="t " id="t40" style="left:29.5px;top:676.5px;letter-spacing:-0.122px;">Build:</div>
<div class="t " id="t41" style="left:78px;top:676.5px;transform:scaleX(0.9180);transform-origin:0 50%;">Sync</div>
<div class="t b" id="t42" style="left:90.75px;top:698px;transform:scaleX(0.9297);transform-origin:0 50%;">BlogApplication:</div>
<div class="t " id="t43" style="left:183.75px;top:698px;letter-spacing:-0.226px;">synced successfully</div>
<div class="t g" id="t44" style="left:289.5px;top:698px;letter-spacing:-0.275px;">at 2/1/2020 10:45 PM</div>
<div class="t " id="t45" style="left:108px;top:714px;letter-spacing:-0.050px;">Run build</div>
<div class="t g" id="t46" style="left:162.5px;top:714px;letter-spacing:0.021px;">C:\Users\sekhonss\AndroidStudioProjects\BlogApplication</div>
<div class="t " id="t47" style="left:126.25px;top:730px;letter-spacing:0.036px;">Load build</div>
<div class="t " id="t48" style="left:126.25px;top:746px;letter-spacing:0.119px;">Configure build</div>
<div class="t " id="t49" style="left:126.25px;top:762px;letter-spacing:-0.158px;">Calculate task graph</div>
<div class="t " id="t50" style="left:126.25px;top:778px;transform:scaleX(0.9230);transform-origin:0 50%;">Run tasks</div>
<div class="t g" id="t51" style="left:1841.6px;top:698px;transform:scaleX(0.9097);transform-origin:0 50%;">1 s 654 ms</div>
<div class="t g" id="t52" style="left:1841.6px;top:714px;transform:scaleX(0.9097);transform-origin:0 50%;">1 s 387 ms</div>
<div class="t g" id="t53" style="left:1858.5px;top:730px;transform:scaleX(0.9274);transform-origin:0 50%;">134 ms</div>
<div class="t g" id="t54" style="left:1858px;top:746px;transform:scaleX(0.9401);transform-origin:0 50%;">771 ms</div>
<div class="t g" id="t55" style="left:1864px;top:762px;letter-spacing:-0.338px;">46 ms</div>
<div class="t g" id="t56" style="left:1858px;top:778px;transform:scaleX(0.9401);transform-origin:0 50%;">432 ms</div>
<div class="t " id="t57" style="left:47.5px;top:976.5px;transform:scaleX(0.9143);transform-origin:0 50%;">TODO</div>
<div class="t " id="t58" style="left:116px;top:976.5px;letter-spacing:-0.295px;">Terminal</div>
<div class="t b2" id="t59" style="left:196px;top:976.5px;letter-spacing:0.062px;">Build</div>
<div class="t " id="t60" style="left:260px;top:976.5px;transform:scaleX(0.9314);transform-origin:0 50%;"><u>6</u>: Logcat</div>
<div class="t " id="t61" style="left:1838px;top:976.5px;transform:scaleX(0.9251);transform-origin:0 50%;">Event Log</div>
<div class="t " id="t62" style="left:31px;top:997.5px;letter-spacing:-0.121px;">NDK Resolution Outcome: Project settings: Gradle model version=5.4.1, NDK version is UNKNOWN (a minute ago)</div>
<div class="t " id="t63" style="left:1676px;top:997.5px;transform:scaleX(0.8776);transform-origin:0 50%;">15:1</div>
<div class="t " id="t64" style="left:1708px;top:997.5px;transform:scaleX(0.8614);transform-origin:0 50%;">CRLF</div>
<div class="t " id="t65" style="left:1756px;top:997.5px;transform:scaleX(0.9412);transform-origin:0 50%;">UTF-8</div>
<div class="t " id="t66" style="left:1808.5px;top:997.5px;transform:scaleX(0.9369);transform-origin:0 50%;">4 spaces</div>
</div>
</body></html>
